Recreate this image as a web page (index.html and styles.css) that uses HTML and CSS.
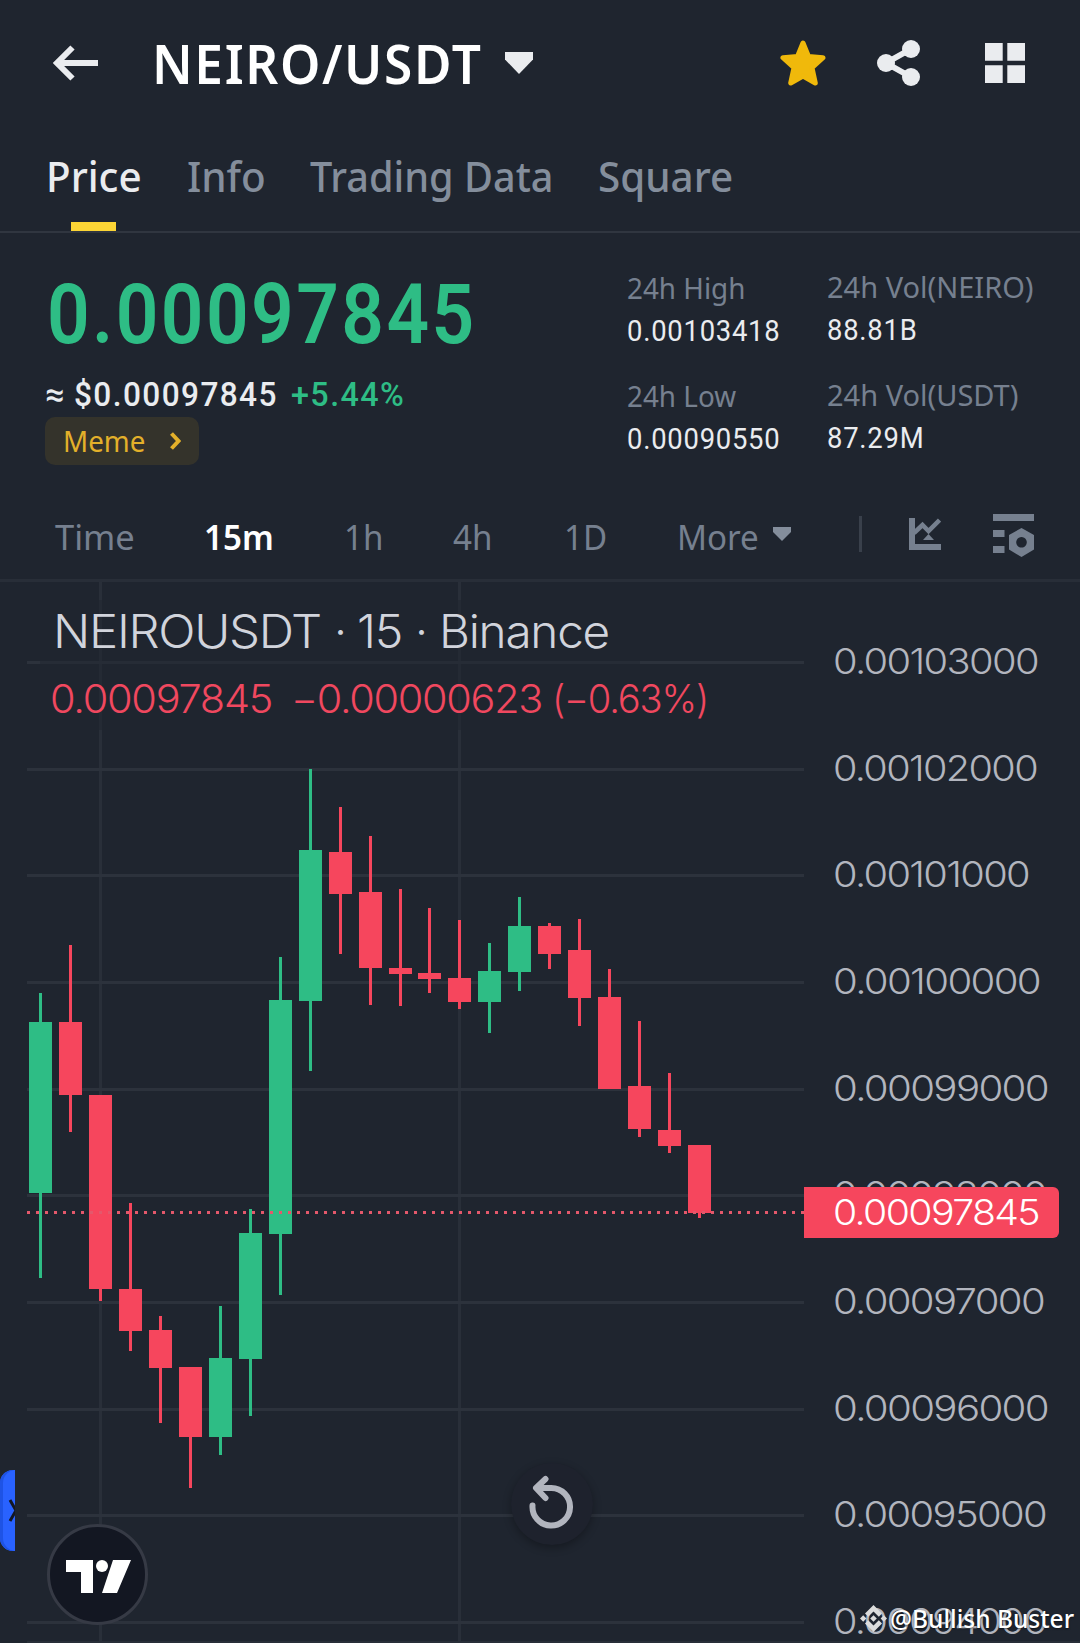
FILE: index.html
```html
<!DOCTYPE html>
<html lang="en">
<head>
<meta charset="utf-8">
<title>NEIRO/USDT</title>
<link rel="stylesheet" href="styles.css">
</head>
<body>
<main class="app">
  <header class="topbar">
    <svg class="back" width="46" height="36" viewBox="0 0 46 36"><path d="M20.5 2.5 5 18l15.500 15.500M4 18h42" fill="none" stroke="#eaecef" stroke-width="6"/></svg>
    <h1 class="pair"><span class="fit">NEIRO/USDT</span></h1>
    <svg class="caret" width="28" height="22" viewBox="0 0 28 22"><path d="M0 0h28v7.500L14 22 0 7.500z" fill="#eaecef"/></svg>
    <nav class="actions">
      <svg width="46" height="46" viewBox="0 0 46 46"><path d="M23 3l5.500 13.500 14.500 1.200-11 10 3.300 15.300L23 36l-12.300 7 3.300-15.300-11-10 14.500-1.200z" fill="#f0b90b" stroke="#f0b90b" stroke-width="5" stroke-linejoin="round"/></svg>
      <svg width="43" height="46" viewBox="0 0 43 46"><path d="M34 9 9 23l25 14" fill="none" stroke="#eaecef" stroke-width="6"/><circle cx="34" cy="9" r="9" fill="#eaecef"/><circle cx="9" cy="23" r="9" fill="#eaecef"/><circle cx="34" cy="37" r="9" fill="#eaecef"/></svg>
      <svg width="40" height="40" viewBox="0 0 40 40"><path d="M0 0h17.700v17.700H0zM22.300 0H40v17.700H22.300zM0 22.300h17.700V40H0zM22.300 22.300H40V40H22.300z" fill="#eaecef"/></svg>
    </nav>
  </header>

  <nav class="tabs">
    <a class="tab tab-price active"><span class="fit">Price</span></a>
    <a class="tab tab-info"><span class="fit">Info</span></a>
    <a class="tab tab-trading"><span class="fit">Trading Data</span></a>
    <a class="tab tab-square"><span class="fit">Square</span></a>
  </nav>

  <section class="summary">
    <div class="quote">
      <div class="last"><span class="fit">0.00097845</span></div>
      <div class="fiat"><span class="approx">≈</span><span class="usd fit">$0.00097845</span><span class="change fit">+5.44%</span></div>
      <a class="tag"><span class="fit">Meme</span><svg width="11" height="18" viewBox="0 0 11 18"><path d="M1.500 1.500 8.500 9l-7 7.500" fill="none" stroke="#e3b02a" stroke-width="4"/></svg></a>
    </div>
    <dl class="stats">
      <div class="stat"><dt><span class="fit">24h High</span></dt><dd><span class="fit">0.00103418</span></dd></div>
      <div class="stat volume"><dt><span class="fit">24h Vol(NEIRO)</span></dt><dd><span class="fit">88.81B</span></dd></div>
      <div class="stat"><dt><span class="fit">24h Low</span></dt><dd><span class="fit">0.00090550</span></dd></div>
      <div class="stat volume"><dt><span class="fit">24h Vol(USDT)</span></dt><dd><span class="fit">87.29M</span></dd></div>
    </dl>
  </section>

  <nav class="periods">
    <a class="period p-time"><span class="fit">Time</span></a>
    <a class="period p-15m active"><span class="fit">15m</span></a>
    <a class="period p-1h"><span class="fit">1h</span></a>
    <a class="period p-4h"><span class="fit">4h</span></a>
    <a class="period p-1d"><span class="fit">1D</span></a>
    <a class="period p-more"><span class="fit">More</span></a>
    <svg class="more-caret" width="18" height="14" viewBox="0 0 18 14"><path d="M0 0h18v5L9 14 0 5z" fill="#848e9c"/></svg>
    <i class="divider"></i>
    <svg class="ic-chart" width="32" height="32" viewBox="0 0 32 32"><path d="M0 0h6v26h26v6H0z" fill="#76808f"/><path d="M5 15 13.500 7l6 6L30.500 2" fill="none" stroke="#76808f" stroke-width="4.500"/><path d="M19.500 16l5.500 6H14z" fill="#76808f"/></svg>
    <svg class="ic-settings" width="41" height="43" viewBox="0 0 41 43"><path d="M0 0h41v7H0zM0 16h11.500v7H0zM0 32h11.500v7H0z" fill="#76808f"/><path fill-rule="evenodd" d="M28.500 14 41 21v14.500L28.500 43 16 35.500V21zM28.500 23a5.300 5.300 0 1 0 .01 0z" fill="#76808f"/></svg>
  </nav>

  <section class="chart">
    <svg class="plot" width="1080" height="1061" viewBox="0 582 1080 1061">
      <path d="M100.500 582V1643M459.500 582V1643" stroke="#292f39" stroke-width="3"/>
      <path d="M27 662.500H804M27 769.500H804M27 875.500H804M27 982.500H804M27 1089.500H804M27 1195.500H804M27 1302.500H804M27 1409.500H804M27 1515.500H804M27 1622.500H804" stroke="#2c323c" stroke-width="3"/>
      <path d="M27 1642H1080" stroke="#282e38" stroke-width="2"/>
      <rect x="40" y="600" width="600" height="130" fill="#1f252f" opacity=".5"/>
      <g fill="none" stroke="#2ebd85">
        <path stroke-width="3" d="M40.500 993V1278M220.500 1306V1455M250.500 1209V1416M280.500 957V1295M310.500 769V1071M489.500 943V1033M519.500 897V991"/>
        <path stroke-width="23" d="M40.500 1022V1193M220.500 1358V1437M250.500 1233V1359M280.500 1000V1234M310.500 850V1001M489.500 971V1002M519.500 926V972"/>
      </g>
      <g fill="none" stroke="#f6465d">
        <path stroke-width="3" d="M70.500 945V1132M100.500 1095V1301M130.500 1203V1351M160.500 1316V1423M190.500 1367V1488M340.500 807V954M370.500 836V1005M400.500 889V1006M429.500 908V993M459.500 920V1009M549.500 923V969M579.500 919V1026M609.500 969V1089M639.500 1021V1137M669.500 1073V1153M699.500 1145V1218"/>
        <path stroke-width="23" d="M70.500 1022V1095M100.500 1095V1289M130.500 1289V1331M160.500 1330V1368M190.500 1367V1437M340.500 852V894M370.500 892V968M400.500 968V974M429.500 973V979M459.500 978V1002M549.500 926V954M579.500 950V998M609.500 997V1089M639.500 1086V1129M669.500 1130V1146M699.500 1145V1213"/>
        <path stroke="#e4586b" stroke-width="3" stroke-dasharray="3 6" d="M27 1212.500H804"/>
      </g>
      <g class="axis">
        <text x="833" y="674" textLength="205" lengthAdjust="spacingAndGlyphs">0.00103000</text>
        <text x="833" y="781" textLength="204" lengthAdjust="spacingAndGlyphs">0.00102000</text>
        <text x="833" y="887" textLength="196" lengthAdjust="spacingAndGlyphs">0.00101000</text>
        <text x="833" y="994" textLength="207" lengthAdjust="spacingAndGlyphs">0.00100000</text>
        <text x="833" y="1101" textLength="215" lengthAdjust="spacingAndGlyphs">0.00099000</text>
        <text x="833" y="1207" textLength="213" lengthAdjust="spacingAndGlyphs">0.00098000</text>
        <text x="833" y="1314" textLength="211" lengthAdjust="spacingAndGlyphs">0.00097000</text>
        <text x="833" y="1420.500" textLength="215" lengthAdjust="spacingAndGlyphs">0.00096000</text>
        <text x="833" y="1527" textLength="213" lengthAdjust="spacingAndGlyphs">0.00095000</text>
        <text x="833" y="1634" textLength="213" lengthAdjust="spacingAndGlyphs">0.00094000</text>
      </g>
      <path d="M804 1187h249a6 6 0 0 1 6 6v39a6 6 0 0 1-6 6H804z" fill="#f6465d"/>
      <g class="axis current"><text x="833" y="1225" textLength="206" lengthAdjust="spacingAndGlyphs">0.00097845</text></g>
      <g class="legend">
        <g class="symbol">
          <text x="53" y="648" textLength="268" lengthAdjust="spacingAndGlyphs">NEIROUSDT</text>
          <text x="334" y="648">·</text>
          <text x="357" y="648" textLength="45" lengthAdjust="spacingAndGlyphs">15</text>
          <text x="415" y="648">·</text>
          <text x="439" y="648" textLength="170" lengthAdjust="spacingAndGlyphs">Binance</text>
        </g>
        <text x="50" y="713" textLength="222" lengthAdjust="spacingAndGlyphs">0.00097845</text>
        <text x="291" y="713" textLength="251" lengthAdjust="spacingAndGlyphs">−0.00000623</text>
        <text x="552" y="713" textLength="156" lengthAdjust="spacingAndGlyphs">(−0.63%)</text>
      </g>
    </svg>

    <a class="drawer"><svg width="15" height="81" viewBox="0 0 15 81"><path d="M10 30l6 10.500-6 10.500" fill="none" stroke="#131722" stroke-width="3"/></svg></a>
    <a class="reset"><svg width="82" height="82" viewBox="0 0 82 82"><path d="M21.500 42.500A18.800 18.800 0 1 0 40.300 25H25.500M34.500 16 25 25l9.500 10" fill="none" stroke="#b2b5be" stroke-width="6" stroke-linecap="round" stroke-linejoin="round"/></svg></a>
    <a class="tv"><svg width="65" height="33" viewBox="0 0 65 33"><path d="M0 0h27v33H15V12H0zM47 0h18L51 33H36z" fill="#fff"/><circle cx="36" cy="6" r="6" fill="#fff"/></svg></a>
    <div class="credit"><svg width="27" height="27" viewBox="0 0 27 27"><path d="M13.500 0l8.500 8.500-3.200 3.200-5.300-5.300-5.300 5.300L5 8.500zM13.500 27 5 18.500l3.200-3.200 5.300 5.300 5.300-5.300 3.200 3.200zM13.500 10.200l3.300 3.300-3.300 3.300-3.300-3.300zM3.200 10.300l3.200 3.200-3.200 3.200L0 13.500zM23.800 10.300l3.200 3.200-3.200 3.200-3.200-3.200z" fill="#dcdcdc"/></svg><span class="fit">@Bullish Buster</span></div>
  </section>
</main>
</body>
</html>
```
FILE: styles.css
```css
* { box-sizing: border-box; }
body { margin: 0; background: #1f252f; color: #eaecef; font-family: "Noto Sans", sans-serif; }
.app { width: 1080px; height: 1643px; overflow: hidden; display: flex; flex-direction: column; }
svg { display: block; flex: none; }
a { display: block; flex: none; }
/* glyph widths are tuned per label, anchored at their left edge */
.fit { display: inline-block; white-space: nowrap; transform-origin: 0 50%; }

.topbar { height: 126px; display: flex; align-items: center; padding: 0 55px 0 52px; flex: none; }
.pair { margin: 0 0 0 54px; width: 354px; font-size: 53.500px; font-weight: 600; line-height: 126px; letter-spacing: 1.700px; color: #fff; }
.pair .fit { transform: scaleX(.96); padding-top: 2px; }
.caret { margin-left: -1px; }
.actions { margin-left: auto; display: flex; align-items: center; }
.actions svg + svg { margin-left: 51px; }
.actions svg:last-child { margin-left: 65px; }

.tabs { height: 107px; flex: none; display: flex; padding-left: 46px; border-bottom: 2px solid #303640; font-size: 41px; font-weight: 500; line-height: 101px; color: #848e9c; }
.tab { position: relative; height: 105px; }
.tab-price { width: 141px; }
.tab-info { width: 123px; }
.tab-trading { width: 288px; }
.tab .fit { transform: scaleX(.985); }
.tab-trading .fit { transform: scaleX(.967); }
.tab.active { color: #eaecef; }
.tab.active::after { content: ""; position: absolute; left: 25px; bottom: 0; width: 45px; height: 9px; background: #fcd535; }

.summary { height: 254px; flex: none; display: flex; padding-left: 45px; }
.quote { width: 582px; font-family: Roboto, sans-serif; }
.last { margin-top: 34px; height: 96px; padding-left: 2px; font-size: 83px; font-weight: 600; line-height: 96px; letter-spacing: 2.700px; color: #2ebd85; }
.last .fit { transform: scaleX(.9); }
.fiat { height: 54px; display: flex; font-size: 34px; font-weight: 500; line-height: 62px; letter-spacing: 1.500px; }
.approx { width: 29px; }
.usd { width: 217px; transform: scaleX(.93); }
.change { color: #2ebd85; transform: scaleX(.95); }
.tag { width: 154px; height: 48px; border-radius: 10px; background: #34332b; color: #e3b02a; display: flex; align-items: center; font: 29.500px/48px "Noto Sans", sans-serif; padding-left: 18px; }
.tag .fit { width: 107px; transform: scaleX(.94); }
.stats { margin: 35px 0 0; display: grid; grid-template-columns: 200px 240px; grid-auto-rows: 108px; align-content: start; }
.stat dt { font-size: 29px; line-height: 40px; color: #76808f; }
.stat dt .fit { transform: scaleX(.96); }
.stat dd { margin: 0; padding-top: 1px; font: 450 29.500px/44px Roboto, sans-serif; letter-spacing: .8px; }
.stat dd .fit { transform: scaleX(.93); }
.volume { margin-top: -1px; }
.volume dt .fit { transform: scaleX(1); }

.periods { position: relative; height: 95px; flex: none; display: flex; padding-left: 55px; border-bottom: 3px solid #282e38; font-size: 34.500px; line-height: 99px; color: #76808f; }
.period .fit { transform: scaleX(.96); }
.period.active { color: #fff; font-weight: 600; }
.p-time { width: 149px; }
.p-time .fit { transform: scaleX(1); }
.p-15m { width: 140px; }
.p-1h { width: 109px; }
.p-4h { width: 111px; }
.p-1d { width: 113px; }
.p-more { width: 96px; }
.more-caret { margin-top: 40px; }
.divider { width: 3px; height: 36px; margin: 29px 47px 0 68px; background: #39404b; flex: none; }
.ic-chart { margin: 31px 52px 0 0; }
.ic-settings { margin-top: 27px; }

.chart { position: relative; height: 1061px; flex: none; }
.axis { font: 300 36px Inter, sans-serif; letter-spacing: -1.500px; fill: #b2b5be; }
.current { fill: #fff; }
.legend { font: 300 39px Inter, sans-serif; letter-spacing: -1.200px; fill: #f0485f; }
.symbol { font-size: 46px; fill: #d1d4dc; }
.drawer { position: absolute; left: 0; top: 888px; width: 15px; height: 81px; border-radius: 13px 0 0 13px; background: #2962ff; box-shadow: inset 3px 0 0 #1e53e5; overflow: hidden; }
.reset { position: absolute; left: 511px; top: 881px; width: 82px; height: 82px; border-radius: 50%; background: #1e222d; box-shadow: 0 3px 8px rgba(0,0,0,.3); }
.tv { position: absolute; left: 47px; top: 942px; width: 101px; height: 101px; border-radius: 50%; border: 3px solid #363a45; background: #131722; display: flex; padding: 33px 0 0 16px; }
.credit { position: absolute; left: 860px; top: 1018px; height: 36px; display: flex; align-items: center; gap: 3px; color: #fff; font-size: 25px; line-height: 36px; font-weight: 500; text-shadow: 0 1px 2px rgba(0,0,0,.5); }
.credit .fit { transform: scaleX(.98); }
```
